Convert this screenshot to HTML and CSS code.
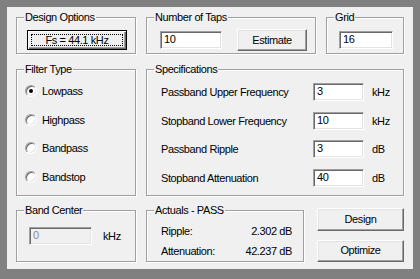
FILE: index.html
```html
<!DOCTYPE html>
<html>
<head>
<meta charset="utf-8">
<link rel="stylesheet" href="styles.css">
</head>
<body>
<div class="window">
  <div class="row r1">
    <div class="group g-design">
      <span class="legend">Design Options</span>
      <div class="btn btn-default"><span class="focus">Fs = 44.1 kHz</span></div>
    </div>
    <div class="group g-taps">
      <span class="legend">Number of Taps</span>
      <div class="field f-taps">10</div>
      <div class="btn b-estimate">Estimate</div>
    </div>
    <div class="group g-grid">
      <span class="legend">Grid</span>
      <div class="field f-grid">16</div>
    </div>
  </div>
  <div class="row r2">
    <div class="group g-filter">
      <span class="legend">Filter Type</span>
      <div class="radio-row"><span class="radio checked"></span><span>Lowpass</span></div>
      <div class="radio-row"><span class="radio"></span><span>Highpass</span></div>
      <div class="radio-row"><span class="radio"></span><span>Bandpass</span></div>
      <div class="radio-row"><span class="radio"></span><span>Bandstop</span></div>
    </div>
    <div class="group g-specs">
      <span class="legend">Specifications</span>
      <div class="spec-row"><span class="spec-label">Passband Upper Frequency</span><div class="field f-spec">3</div><span class="unit">kHz</span></div>
      <div class="spec-row"><span class="spec-label">Stopband Lower Frequency</span><div class="field f-spec">10</div><span class="unit">kHz</span></div>
      <div class="spec-row"><span class="spec-label">Passband Ripple</span><div class="field f-spec">3</div><span class="unit">dB</span></div>
      <div class="spec-row"><span class="spec-label">Stopband Attenuation</span><div class="field f-spec">40</div><span class="unit">dB</span></div>
    </div>
  </div>
  <div class="row r3">
    <div class="group g-band">
      <span class="legend">Band Center</span>
      <div class="field f-band disabled">0</div>
      <span class="unit-band">kHz</span>
    </div>
    <div class="group g-actuals">
      <span class="legend">Actuals - PASS</span>
      <div class="act-row"><span>Ripple:</span><span>2.302 dB</span></div>
      <div class="act-row"><span>Attenuation:</span><span>42.237 dB</span></div>
    </div>
    <div class="btn-col">
      <div class="btn b-action">Design</div>
      <div class="btn b-action">Optimize</div>
    </div>
  </div>
</div>
</body>
</html>
```
FILE: styles.css
```css
html, body {
  margin: 0;
  padding: 0;
  background: #808080;
  width: 420px;
  height: 279px;
  overflow: hidden;
}
body {
  font-family: "Liberation Sans", Arial, sans-serif;
  font-size: 11px;
  letter-spacing: -0.4px;
  color: #000;
}
.window {
  margin: 7px 7px 0 7px;
  width: 406px;
  height: 262px;
  box-sizing: border-box;
  background: #f0f0f0;
  padding: 10px 9px 0 9px;
}
.row {
  display: flex;
}
.r1 { height: 37px; gap: 10px; }
.r2 { height: 127px; gap: 10px; margin-top: 15px; }
.r3 { height: 52px; margin-top: 14px; }

.group {
  position: relative;
  box-sizing: border-box;
  border: 1px solid #a0a0a0;
  box-shadow: inset 1px 1px 0 #fff, 1px 1px 0 #fff;
}
.legend {
  position: absolute;
  top: -7px;
  left: 7px;
  padding: 0 1px;
  line-height: 13px;
  background: #f0f0f0;
  white-space: nowrap;
}

.btn {
  box-sizing: border-box;
  display: flex;
  align-items: center;
  justify-content: center;
  background: #f0f0f0;
  border: 1px solid;
  border-color: #fff #696969 #696969 #fff;
  box-shadow: inset -1px -1px 0 #a0a0a0, inset 1px 1px 0 #e3e3e3;
  line-height: 13px;
}
.btn-default {
  border: 1px solid #000;
  box-shadow: inset 1px 1px 0 #fff, inset -1px -1px 0 #696969, inset -2px -2px 0 #a0a0a0;
  padding: 3px;
}
.focus {
  flex: 1;
  align-self: stretch;
  display: flex;
  align-items: center;
  justify-content: center;
  border: 1px dotted #000;
}

.field {
  box-sizing: border-box;
  background: #fff;
  border: 1px solid;
  border-color: #a0a0a0 #fff #fff #a0a0a0;
  box-shadow: inset 1px 1px 0 #696969, inset -1px -1px 0 #e3e3e3;
  padding: 0 0 0 3px;
  line-height: 15px;
  height: 18px;
}
.field.disabled {
  background: #f0f0f0;
  color: #8a8a8a;
}

/* row 1 */
.g-design { width: 120px; padding: 12px 0 0 10px; }
.g-design .btn-default { width: 100px; height: 20px; }
.g-taps { width: 170px; display: flex; align-items: flex-start; padding: 13px 0 0 13px; }
.f-taps { width: 62px; }
.b-estimate { width: 70px; height: 22px; margin: -2px 0 0 15px; }
.g-grid { width: 78px; padding: 13px 0 0 12px; }
.f-grid { width: 54px; }

/* row 2 */
.g-filter { width: 120px; padding: 7px 0 0 8px; }
.radio-row {
  height: 28.5px;
  display: flex;
  align-items: center;
}
.radio {
  box-sizing: border-box;
  width: 12px;
  height: 12px;
  border-radius: 50%;
  border: 1px solid;
  border-color: #a0a0a0 #fff #fff #a0a0a0;
  box-shadow: inset 1px 1px 0 #696969, inset -1px -1px 0 #e3e3e3;
  background: #fff;
  margin-right: 5px;
  position: relative;
}
.radio.checked::after {
  content: "";
  position: absolute;
  left: 3px;
  top: 3px;
  width: 4px;
  height: 4px;
  border-radius: 50%;
  background: #000;
}
.g-specs { flex: 1; padding: 8px 0 0 14px; }
.spec-row {
  height: 28.5px;
  display: flex;
  align-items: center;
}
.spec-label { width: 152px; }
.f-spec { width: 51px; }
.unit { margin-left: 8px; }

/* row 3 */
.g-band { width: 120px; display: flex; align-items: flex-start; padding: 16px 0 0 12px; }
.f-band { width: 63px; }
.unit-band { margin-left: 11px; line-height: 18px; }
.g-actuals { width: 158px; margin-left: 10px; padding: 10px 11px 0 14px; }
.act-row {
  height: 20px;
  display: flex;
  align-items: center;
  justify-content: space-between;
}
.btn-col {
  width: 87px;
  margin-left: 13px;
  margin-top: -2px;
  display: flex;
  flex-direction: column;
  gap: 9px;
}
.b-action { height: 23px; }
```
